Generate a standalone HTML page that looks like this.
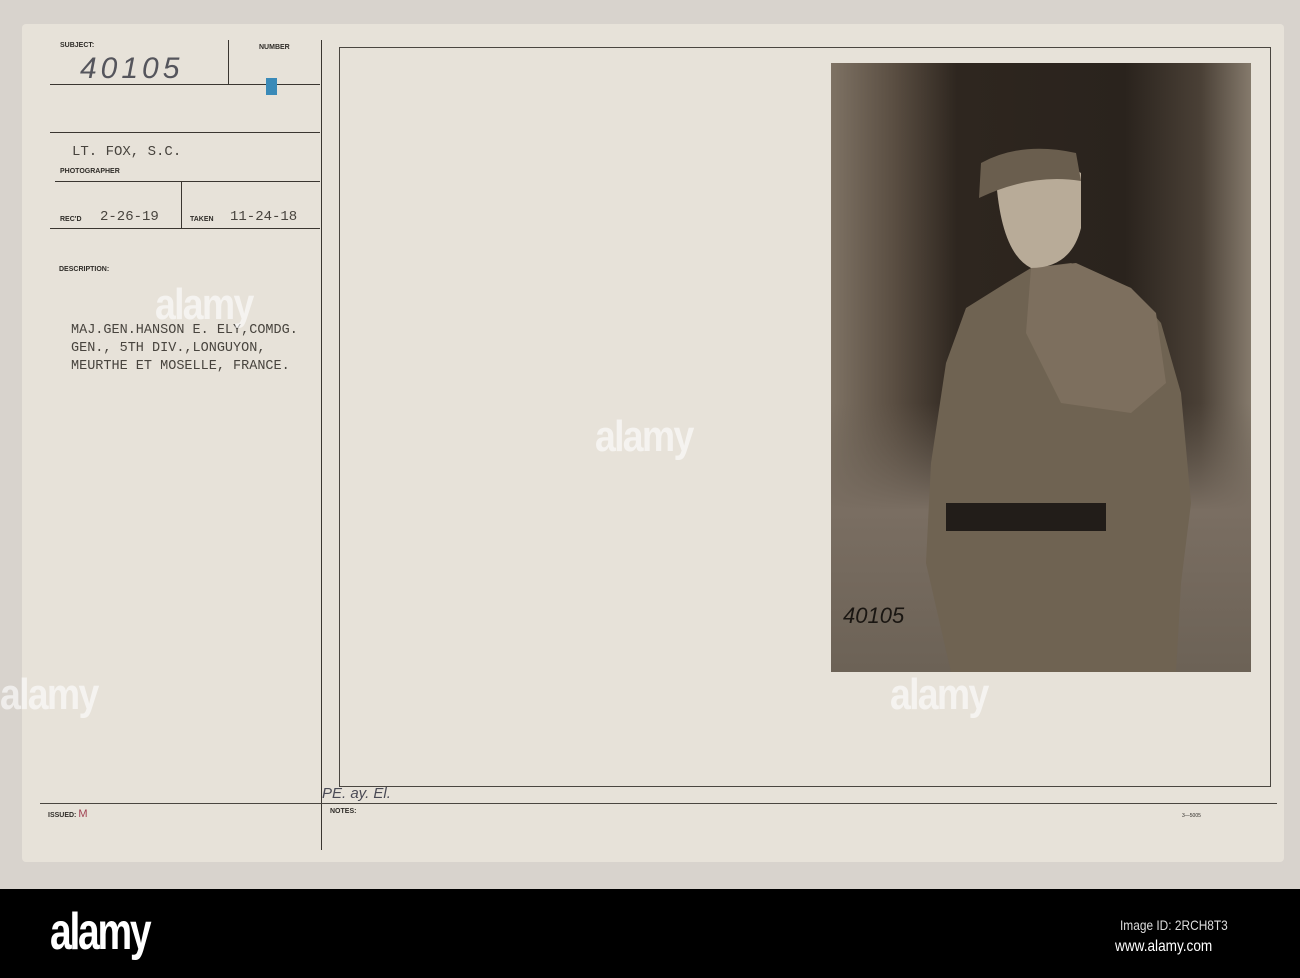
<!DOCTYPE html>
<html><head><style>
*{margin:0;padding:0;box-sizing:border-box}
body{width:1300px;height:978px;position:relative;background:#d8d3cd;overflow:hidden;font-family:"Liberation Mono",monospace}
.card{position:absolute;left:22px;top:24px;width:1262px;height:838px;background:#e7e2d9;border-radius:4px}
.l{position:absolute;background:#3a3630}
.t{position:absolute;color:#3b3833;white-space:nowrap}
.lab{font-family:"Liberation Sans",sans-serif;font-weight:bold;font-size:7px;color:#2f2c28}
.ty{font-size:14px;color:#48443e}
.hand{font-family:"Liberation Sans",sans-serif;font-style:italic;color:#4a4a55}
.wm{position:absolute;color:rgba(255,255,255,.6);font-family:"Liberation Sans",sans-serif;font-weight:bold;font-size:44px;letter-spacing:-2px;transform:scaleX(.85);transform-origin:left}
.band{position:absolute;left:0;top:889px;width:1300px;height:89px;background:#000}
</style></head><body>
<div class="card"></div>
<div class="l" style="left:50px;top:84px;width:270px;height:1px"></div>
<div class="l" style="left:50px;top:132px;width:270px;height:1px"></div>
<div class="l" style="left:55px;top:181px;width:265px;height:1px"></div>
<div class="l" style="left:50px;top:228px;width:270px;height:1px"></div>
<div class="l" style="left:228px;top:40px;width:1px;height:44px"></div>
<div class="l" style="left:181px;top:182px;width:1px;height:46px"></div>
<div class="l" style="left:321px;top:40px;width:1px;height:810px"></div>
<div style="position:absolute;left:339px;top:47px;width:932px;height:740px;border:1px solid #4a4640"></div>
<div class="l" style="left:40px;top:803px;width:1237px;height:1px;background:#4a4640"></div>
<div class="t lab" style="left:60px;top:42px">SUBJECT:</div>
<div class="t lab" style="left:259px;top:44px">NUMBER</div>
<div class="t hand" style="left:80px;top:52px;font-size:30px;letter-spacing:4px;font-weight:normal;color:#55555c">40105</div>
<div style="position:absolute;left:266px;top:78px;width:11px;height:17px;background:#3a8ab8"></div>
<div class="t ty" style="left:72px;top:144px">LT. FOX, S.C.</div>
<div class="t lab" style="left:60px;top:168px">PHOTOGRAPHER</div>
<div class="t lab" style="left:60px;top:216px">REC'D</div>
<div class="t ty" style="left:100px;top:209px">2-26-19</div>
<div class="t lab" style="left:190px;top:216px">TAKEN</div>
<div class="t ty" style="left:230px;top:209px">11-24-18</div>
<div class="t lab" style="left:59px;top:266px">DESCRIPTION:</div>
<div class="t ty" style="left:71px;top:322px;line-height:18px;font-size:13.5px">MAJ.GEN.HANSON E. ELY,COMDG.<br>GEN., 5TH DIV.,LONGUYON,<br>MEURTHE ET MOSELLE, FRANCE.</div>
<div class="t lab" style="left:48px;top:808px">ISSUED: <span style="font-size:11px;font-weight:normal;color:#a04050">M</span></div>
<div class="t lab" style="left:330px;top:808px">NOTES:</div>
<div class="t hand" style="left:322px;top:785px;font-size:15px">PE. ay. El.</div>
<div class="t lab" style="left:1182px;top:813px;font-size:5px;font-weight:normal">3—5005</div>
<svg style="position:absolute;left:831px;top:63px" width="420" height="609" viewBox="0 0 420 609">
<defs><linearGradient id="bg" x1="0" x2="1"><stop offset="0" stop-color="#7e7264"/><stop offset=".15" stop-color="#5a4e42"/><stop offset=".3" stop-color="#2e261f"/><stop offset=".7" stop-color="#2a231d"/><stop offset=".88" stop-color="#4a4036"/><stop offset="1" stop-color="#857a6c"/></linearGradient>
<linearGradient id="gr" y1="0" y2="1" x1="0" x2="0"><stop offset="0" stop-color="#6a6054" stop-opacity="0"/><stop offset=".4" stop-color="#7a6e62"/><stop offset="1" stop-color="#6c6256"/></linearGradient></defs>
<rect width="420" height="609" fill="url(#bg)"/>
<rect y="340" width="420" height="269" fill="url(#gr)"/>
<path d="M120 609 L95 500 L100 400 L115 300 L135 245 L175 220 L200 205 L240 200 L300 225 L330 260 L350 330 L360 440 L350 520 L345 609 Z" fill="#6f6352"/>
<path d="M200 205 L245 200 L300 225 L325 250 L335 320 L300 350 L230 340 L195 270 Z" fill="#7d6f5e"/>
<rect x="115" y="440" width="160" height="28" fill="#221d19"/>
<path d="M165 115 Q168 85 212 88 L250 110 L250 165 Q240 205 200 205 Q170 190 165 115Z" fill="#b8ab98"/>
<path d="M148 135 L150 100 Q190 78 245 90 L250 118 Q200 110 148 135Z" fill="#6a5e4e"/>
<text x="12" y="560" font-family="Liberation Sans" font-style="italic" font-size="22" fill="#1a1612">40105</text>
</svg>
<div class="band"></div>
<div class="t" style="left:50px;top:902px;font-family:'Liberation Sans',sans-serif;font-weight:bold;font-size:52px;color:#fff;letter-spacing:-3px;transform:scaleX(.75);transform-origin:left">alamy</div>
<div class="t" style="left:1120px;top:917px;font-family:'Liberation Sans',sans-serif;font-size:14px;color:#ddd;transform:scaleX(.85);transform-origin:left">Image ID: 2RCH8T3</div>
<div class="t" style="left:1115px;top:938px;font-family:'Liberation Sans',sans-serif;font-size:16px;color:#fff;transform:scaleX(.85);transform-origin:left">www.alamy.com</div>
<div class="wm" style="left:155px;top:280px">alamy</div>
<div class="wm" style="left:595px;top:412px">alamy</div>
<div class="wm" style="left:0px;top:670px">alamy</div>
<div class="wm" style="left:890px;top:670px">alamy</div>
</body></html>
